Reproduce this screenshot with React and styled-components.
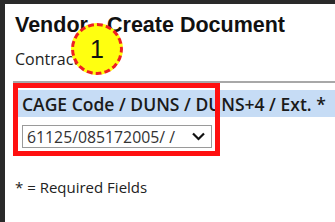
import React from 'react';
import styled, { createGlobalStyle } from 'styled-components';

const Global = createGlobalStyle`
  html, body { margin: 0; padding: 0; }
  body { width: 335px; height: 222px; overflow: hidden; background: #2a2a2a; }
`;

// dark window frame round the page
const Frame = styled.div`
  height: 222px;
  box-sizing: border-box;
  padding: 4px 0 0 5px;
  background: #2a2a2a;
`;

const Panel = styled.div`
  position: relative;
  height: 100%;
  background: #ffffff;
  padding-top: 9px;
  box-sizing: border-box;
  display: flex;
  flex-direction: column;
  align-items: stretch;
`;

const Title = styled.h1`
  margin: 0 0 0 10px;
  font-family: "Liberation Sans", Arial, sans-serif;
  font-weight: bold;
  font-size: 21.5px;
  line-height: 24px;
  height: 24px;
  color: #111;
`;

const Line = styled.div`
  margin: ${p => p.$top || 0}px 0 0 10px;
  font-family: "Open Sans", sans-serif;
  font-size: ${p => p.$size || 15}px;
  line-height: 20px;
  height: 20px;
  color: #222;
`;

const Rule = styled.div`
  margin: 12px 0 0 8px;
  height: 2px;
  background: #a8a8a8;
`;

const Band = styled.div`
  margin: 7px 0 0 8px;
  height: 27px;
  display: flex;
  align-items: center;
  padding-left: 9px;
  background: #c6dcf5;
  font-family: "Open Sans", sans-serif;
  font-size: 17.5px;
  font-weight: 600;
  color: #1a1a1a;
  white-space: nowrap;
  overflow: hidden;
`;

const Select = styled.div`
  margin: 8px 0 0 17px;
  width: 190px;
  height: 23px;
  flex: none;
  box-sizing: border-box;
  border: 1px solid #9a9a9a;
  display: flex;
  align-items: center;
  justify-content: space-between;
  padding: 0 6px 0 4px;
  font-family: "Open Sans", sans-serif;
  font-size: 15.8px;
  color: #333;
`;

const Callout = styled.div`
  position: absolute;
  left: 8px;
  top: 79px;
  width: 207px;
  height: 73px;
  box-sizing: border-box;
  border: 5px solid #ff1010;
`;

const Badge = styled.div`
  position: absolute;
  left: 66px;
  top: 19px;
  width: 52px;
  height: 52px;
  box-sizing: border-box;
  border-radius: 50%;
  border: 3px dashed #ee2020;
  background: #ffff10;
  display: flex;
  align-items: center;
  justify-content: center;
  font-family: "Liberation Sans", Arial, sans-serif;
  font-size: 25px;
  color: #111;
`;

function Chevron() {
  return (
    <svg width="13" height="9" viewBox="0 0 13 9">
      <path d="M1 1.5 L6.5 7 L12 1.5" fill="none" stroke="#111" strokeWidth="2.2" />
    </svg>
  );
}

function App() {
  return (
    <>
      <Global />
      <Frame>
        <Panel>
          <Title>Vendor - Create Document</Title>
          <Line $top={12} $size={16}>Contract</Line>
          <Rule />
          <Band>CAGE Code / DUNS / DUNS+4 / Ext. *</Band>
          <Select>
            <span>61125/085172005/ /</span>
            <Chevron />
          </Select>
          <Line $top={29}>* = Required Fields</Line>
          <Callout />
          <Badge>1</Badge>
        </Panel>
      </Frame>
    </>
  );
}

export default App;
